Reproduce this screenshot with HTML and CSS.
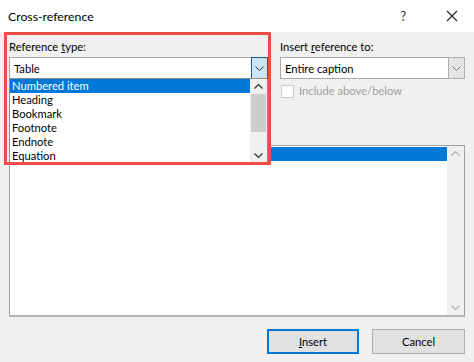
FILE: index.html
```html
<!DOCTYPE html>
<html>
	<head>
		<meta charset="utf-8" />
		<title>Cross-reference</title>
		<link rel="stylesheet" href="styles.css">
	</head>
	<body>
		<div class="dialog">
			<div class="titlebar">
				<span class="title">Cross-reference</span>
				<span class="help">?</span>
				<span class="close"><svg width="12" height="12" viewBox="0 0 12 12"><path d="M1 1L11 11M11 1L1 11" stroke="#222" stroke-width="1.1" fill="none"/></svg></span>
			</div>
			<div class="main">
				<div class="top">
					<div class="col left">
						<div class="label">Reference <u>t</u>ype:</div>
						<div class="combo active">
							<span class="value">Table</span>
							<span class="arrow"><svg width="9" height="5" viewBox="0 0 9 5"><path d="M0.5 0.5L4.5 4.5L8.5 0.5" stroke="#333" stroke-width="1" fill="none"/></svg></span>
							<div class="popup">
								<ul class="items">
									<li class="sel">Numbered item</li>
									<li>Heading</li>
									<li>Bookmark</li>
									<li>Footnote</li>
									<li>Endnote</li>
									<li>Equation</li>
								</ul>
								<div class="vbar">
									<span class="btn"><svg width="9" height="5" viewBox="0 0 9 5"><path d="M0.5 4.5L4.5 0.5L8.5 4.5" stroke="#333" stroke-width="1.2" fill="none"/></svg></span>
									<span class="thumb"></span>
									<span class="track"></span>
									<span class="btn"><svg width="9" height="5" viewBox="0 0 9 5"><path d="M0.5 0.5L4.5 4.5L8.5 0.5" stroke="#333" stroke-width="1.2" fill="none"/></svg></span>
								</div>
							</div>
						</div>
						<div class="spacer"></div>
					</div>
					<div class="col right">
						<div class="label">Insert <u>r</u>eference to:</div>
						<div class="combo">
							<span class="value">Entire caption</span>
							<span class="arrow grey"><svg width="9" height="5" viewBox="0 0 9 5"><path d="M0.5 0.5L4.5 4.5L8.5 0.5" stroke="#777" stroke-width="1" fill="none"/></svg></span>
						</div>
						<div class="check"><span class="box"></span>Include above/below</div>
					</div>
				</div>
				<div class="captions">
					<div class="rows"><div class="row sel"></div></div>
					<div class="vbar light">
						<span class="btn"><svg width="9" height="5" viewBox="0 0 9 5"><path d="M0.5 4.5L4.5 0.5L8.5 4.5" stroke="#b0b0b0" stroke-width="1.2" fill="none"/></svg></span>
						<span class="track"></span>
						<span class="btn"><svg width="9" height="5" viewBox="0 0 9 5"><path d="M0.5 0.5L4.5 4.5L8.5 0.5" stroke="#b0b0b0" stroke-width="1.2" fill="none"/></svg></span>
					</div>
				</div>
				<div class="buttons">
					<span class="button default"><u>I</u>nsert</span>
					<span class="button">Cancel</span>
				</div>
			</div>
			<div class="highlight"></div>
		</div>
	</body>
</html>
```

FILE: styles.css
```css
*{
	margin: 0;
	padding: 0;
	box-sizing: border-box;
}
body{
	font-family: Lato, "Noto Sans", sans-serif;
	font-size: 11.2px;
	color: #000;
}
.dialog{
	width: 474px;
	height: 362px;
	background: #f0f0f0;
	position: relative;
	overflow: hidden;
}
.titlebar{
	height: 32px;
	background: #fff;
	display: flex;
	align-items: center;
	padding: 0 0 0 8px;
}
.title{
	font-size: 12.3px;
	flex: 1;
}
.help{
	font-size: 12.5px;
	color: #222;
	margin-right: 40px;
}
.close{
	display: flex;
	margin-right: 16px;
}
.main{
	padding: 7px 9px 0 9px;
}
.top{
	display: flex;
	gap: 12px;
}
.col.left{
	width: 259px;
}
.col.right{
	flex: 1;
}
.label{
	line-height: 15px;
	height: 15px;
	margin-bottom: 3px;
}
.spacer{
	height: 63px;
}
.combo{
	position: relative;
	height: 22px;
	background: #fff;
	border: 1px solid #a9a9a9;
	display: flex;
	align-items: center;
}
.combo .value{
	flex: 1;
	padding-left: 4px;
}
.combo .arrow{
	width: 17px;
	height: 22px;
	margin: -1px -1px -1px 0;
	border: 1px solid #1c5a9c;
	background: #cce4f7;
	display: flex;
	align-items: center;
	justify-content: center;
}
.combo .arrow.grey{
	border-color: #adadad;
	background: #e5e5e5;
}
.popup{
	position: absolute;
	top: 20px;
	left: -1px;
	right: -1px;
	height: 86px;
	background: #fff;
	border: 1px solid #8c8c8c;
	display: flex;
	z-index: 2;
}
.items{
	list-style: none;
	flex: 1;
}
.items li{
	height: 14px;
	line-height: 14px;
	padding-left: 2px;
}
.items li.sel{
	background: #0078d7;
	color: #fff;
}
.vbar{
	width: 17px;
	background: #f0f0f0;
	display: flex;
	flex-direction: column;
	align-items: center;
}
.vbar .btn{
	height: 15px;
	width: 100%;
	display: flex;
	align-items: center;
	justify-content: center;
}
.vbar .thumb{
	width: 15px;
	height: 38px;
	background: #cdcdcd;
}
.vbar .track{
	flex: 1;
}
.check{
	display: flex;
	align-items: center;
	margin-top: 5px;
	color: #a0a0a0;
	line-height: 14px;
}
.check .box{
	width: 13px;
	height: 13px;
	border: 1px solid #cccccc;
	background: #fff;
	margin: 0 5px 0 1px;
}
.captions{
	margin-top: 3px;
	height: 172px;
	background: #fff;
	border: 1px solid #a0a0a0;
	border-bottom: 2px solid #b4b4b4;
	display: flex;
	padding: 1px 0 0 1px;
}
.rows{
	flex: 1;
}
.row{
	height: 14px;
}
.row.sel{
	background: #0078d7;
}
.captions .vbar{
	margin-top: -1px;
}
.buttons{
	margin-top: 12px;
	display: flex;
	justify-content: flex-end;
	gap: 13px;
}
.button{
	width: 93px;
	height: 25px;
	display: flex;
	align-items: center;
	justify-content: center;
	background: #e1e1e1;
	border: 1px solid #adadad;
}
.button.default{
	border: 2px solid #0078d7;
	width: 92px;
}
.highlight{
	position: absolute;
	left: 4px;
	top: 32px;
	width: 267px;
	height: 133px;
	border: 3px solid #ee4e46;
	z-index: 3;
}
```
